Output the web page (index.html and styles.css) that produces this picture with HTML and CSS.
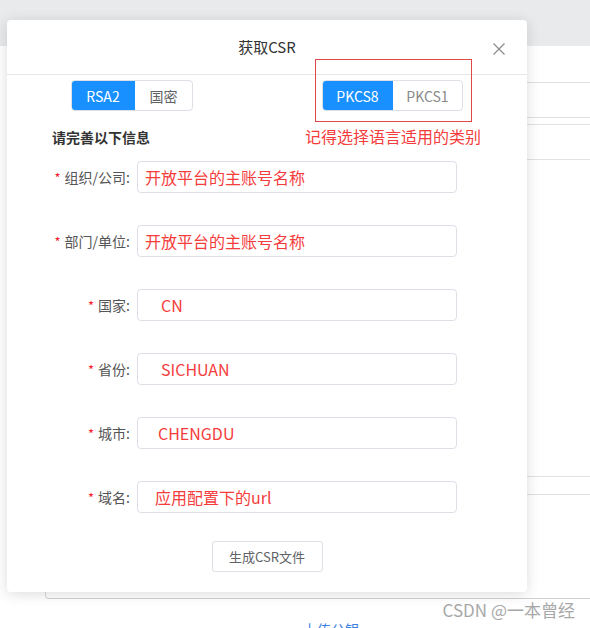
FILE: index.html
```html
<!DOCTYPE html>
<html lang="zh-CN">
<head>
<meta charset="utf-8">
<title>获取CSR</title>
<link rel="stylesheet" href="styles.css">
</head>
<body>
<div class="page">
  <div class="topbar"></div>
  <div class="panel">
    <div class="prow prow-a"></div>
    <div class="prow prow-b"></div>
    <div class="prow prow-c"></div>
    <div class="prow prow-d"></div>
    <div class="prow prow-e"></div>
    <div class="prow prow-f"></div>
    <div class="prow prow-g"></div>
  </div>
  <div class="link-row"><span class="link">上传公钥</span></div>

  <div class="dialog">
    <div class="dialog-header">
      <span></span>
      <span class="dialog-title">获取CSR</span>
      <span class="close">
        <svg width="12" height="12" viewBox="0 0 12 12"><path d="M0.5 0.5 L11.5 11.5 M11.5 0.5 L0.5 11.5" stroke="#8c8c8c" stroke-width="1.2" fill="none"/></svg>
      </span>
    </div>
    <div class="dialog-body">
      <div class="seg-row">
        <div class="seg seg-algo">
          <span class="seg-btn active w-rsa">RSA2</span>
          <span class="seg-btn w-gm">国密</span>
        </div>
        <div class="seg seg-pkcs">
          <span class="seg-btn active w-p8">PKCS8</span>
          <span class="seg-btn muted w-p1">PKCS1</span>
        </div>
      </div>
      <div class="head-row">
        <span class="section-title">请完善以下信息</span>
        <span class="note">记得选择语言适用的类别</span>
      </div>
      <div class="form">
        <div class="form-row">
          <label class="label"><i class="req">*</i>组织/公司:</label>
          <div class="input ind-s">开放平台的主账号名称</div>
        </div>
        <div class="form-row">
          <label class="label"><i class="req">*</i>部门/单位:</label>
          <div class="input ind-s">开放平台的主账号名称</div>
        </div>
        <div class="form-row">
          <label class="label"><i class="req">*</i>国家:</label>
          <div class="input ind-l">CN</div>
        </div>
        <div class="form-row">
          <label class="label"><i class="req">*</i>省份:</label>
          <div class="input ind-l">SICHUAN</div>
        </div>
        <div class="form-row">
          <label class="label"><i class="req">*</i>城市:</label>
          <div class="input ind-m">CHENGDU</div>
        </div>
        <div class="form-row">
          <label class="label"><i class="req">*</i>域名:</label>
          <div class="input ind-u">应用配置下的url</div>
        </div>
      </div>
      <div class="actions">
        <span class="btn">生成CSR文件</span>
      </div>
    </div>
    <div class="mark-box"></div>
  </div>

  <div class="watermark">CSDN @一本曾经</div>
</div>
</body>
</html>
```
FILE: styles.css
```css
* { box-sizing: border-box; }
html, body { margin: 0; padding: 0; }
body {
  background: #fff;
  font-family: "Noto Sans CJK SC", "Noto Sans", sans-serif;
  color: #333;
  width: 590px;
  height: 628px;
  overflow: hidden;
}
.page { position: relative; width: 590px; height: 628px; overflow: hidden; }

.topbar { height: 46px; background: #e9eaec; }

.panel {
  margin-left: 45px;
  border-left: 1px solid #d6d6d6;
  border-bottom: 1px solid #d0d0d0;
  border-bottom-left-radius: 4px;
}
.prow { border-bottom: 1px solid #e2e2e2; }
.prow-a { height: 37px; }
.prow-b { height: 35px; }
.prow-c { height: 7px; }
.prow-d { height: 35px; }
.prow-e { height: 317px; }
.prow-f { height: 18px; }
.prow-g { height: 103px; border-bottom: none; }

.link-row { padding: 17px 0 0 303px; }
.link { color: #3b7fe0; font-size: 14px; line-height: 20px; }

.dialog {
  position: absolute;
  left: 7px;
  top: 20px;
  width: 520px;
  height: 572px;
  background: #fff;
  border-radius: 4px;
  box-shadow: 0 2px 14px rgba(0, 0, 0, 0.14);
}
.dialog-header {
  height: 55px;
  border-bottom: 1px solid #e6e6e6;
  display: grid;
  grid-template-columns: 1fr auto 1fr;
  align-items: center;
}
.dialog-title { font-size: 15px; color: #333; line-height: 20px; }
.close {
  justify-self: end;
  margin-right: 22px;
  margin-top: 3px;
  display: flex;
  width: 12px;
  height: 12px;
}

.seg-row {
  display: flex;
  margin-top: 5px;
  padding-left: 64px;
}
.seg {
  display: flex;
  height: 31px;
  border: 1px solid #dcdfe6;
  border-radius: 4px;
  overflow: hidden;
}
.seg-pkcs { margin-left: 129px; }
.seg-btn {
  display: flex;
  align-items: center;
  justify-content: center;
  font-size: 14px;
  color: #606266;
  height: 100%;
}
.seg-btn.active { background: #1890ff; color: #fff; margin: -1px 0 -1px -1px; height: 31px; }
.seg-btn.muted { color: #8a8a8a; }
.w-rsa { width: 64px; }
.w-gm { width: 57px; }
.w-p8 { width: 71px; }
.w-p1 { width: 69px; }

.head-row {
  display: flex;
  align-items: center;
  margin-top: 16px;
  padding-left: 45px;
  height: 20px;
}
.section-title { font-size: 14px; font-weight: bold; color: #333; width: 253px; }
.note { font-size: 16px; color: #f53c3c; line-height: 20px; margin-top: -2px; }

.form {
  margin-top: 14px;
  display: flex;
  flex-direction: column;
  gap: 32px;
}
.form-row { display: flex; align-items: center; height: 32px; }
.label {
  width: 123px;
  text-align: right;
  font-size: 14px;
  color: #555;
  line-height: 20px;
}
.req {
  font-style: normal;
  color: #f5222d;
  font-size: 13px;
  margin-right: 4px;
}
.input {
  margin-left: 7px;
  width: 320px;
  height: 32px;
  border: 1px solid #dcdfe6;
  border-radius: 4px;
  display: flex;
  align-items: center;
  font-size: 16px;
  color: #f53c3c;
}
.ind-s { padding-left: 7px; }
.ind-l { padding-left: 23px; }
.ind-m { padding-left: 20px; }
.ind-u { padding-left: 17px; }

.actions { display: flex; justify-content: center; margin-top: 28px; }
.btn {
  width: 111px;
  height: 31px;
  border: 1px solid #dcdfe6;
  border-radius: 3px;
  display: flex;
  align-items: center;
  justify-content: center;
  font-size: 13px;
  color: #606266;
}

.mark-box {
  position: absolute;
  left: 308px;
  top: 39px;
  width: 157px;
  height: 63px;
  border: 1px solid #e04848;
}

.watermark {
  position: absolute;
  right: 15px;
  top: 598px;
  font-size: 17px;
  line-height: 24px;
  color: #a8a8a8;
  text-shadow: 0 0 1px #fff;
}
```
